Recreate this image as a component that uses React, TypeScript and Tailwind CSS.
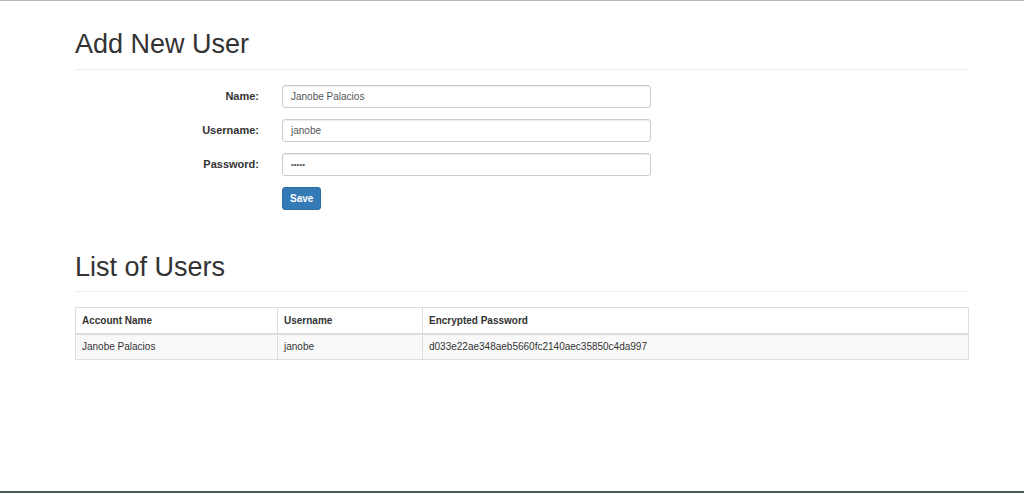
export default function App() {
  const f = { fontFamily: '"Liberation Sans", Arial, sans-serif' };
  const rows = [
    ["Name:", "Janobe Palacios", "text"],
    ["Username:", "janobe", "text"],
    ["Password:", "•••••", "pw"],
  ];
  return (
    <div style={f} className="w-[1024px] h-[493px] bg-white border-t border-[#b8b8b8] flex flex-col text-[#333]">
      <div className="flex-1 px-[75px] w-[1044px]">
        <div className="w-[894px]">
          <h1 className="text-[27px] leading-none mt-[30px] pb-[11px] border-b border-[#eee]">Add New User</h1>
          <div className="flex flex-col gap-[11px] mt-[15px]">
            {rows.map(([l, v, t]) => (
              <div key={l} className="flex items-center">
                <label className="w-[184px] text-right text-[11px] font-bold">{l}</label>
                <div className="ml-[23px] w-[369px] h-[23px] border border-[#ccc] rounded-[3px] px-[8px] flex items-center text-[10px] text-[#555] shadow-[inset_0_1px_1px_rgba(0,0,0,0.075)]">
                  <span className={t === "pw" ? "text-[8px]" : ""}>{v}</span>
                </div>
              </div>
            ))}
            <div className="flex">
              <button className="ml-[207px] h-[23px] px-[7px] bg-[#337ab7] border border-[#2e6da4] rounded-[3px] text-white text-[10px] font-bold">Save</button>
            </div>
          </div>
          <h1 className="text-[27px] leading-none mt-[44px] pb-[10px] border-b border-[#eee]">List of Users</h1>
          <table className="w-full mt-[15px] border border-[#ddd] border-collapse text-[10px]">
            <thead>
              <tr className="h-[26px] border-b-2 border-[#ddd]">
                <th className="w-[202px] text-left font-bold px-[6px] border-r border-[#ddd]">Account Name</th>
                <th className="w-[145px] text-left font-bold px-[6px] border-r border-[#ddd]">Username</th>
                <th className="text-left font-bold px-[6px]">Encrypted Password</th>
              </tr>
            </thead>
            <tbody>
              <tr className="h-[26px] bg-[#f9f9f9]">
                <td className="px-[6px] border-r border-[#ddd]">Janobe Palacios</td>
                <td className="px-[6px] border-r border-[#ddd]">janobe</td>
                <td className="px-[6px]">d033e22ae348aeb5660fc2140aec35850c4da997</td>
              </tr>
            </tbody>
          </table>
        </div>
      </div>
      <div className="h-[2px] bg-[#4a5a58]" />
    </div>
  );
}
